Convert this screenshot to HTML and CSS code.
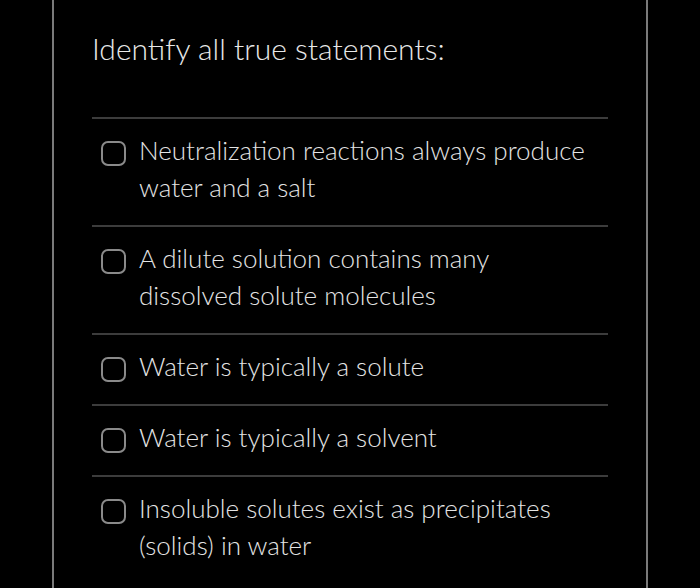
FILE: index.html
```html
<!DOCTYPE html>
<html>
<head>
<meta charset="utf-8">
<link rel="stylesheet" href="styles.css">
</head>
<body>
<div class="card">
  <h1 class="title">Identify all true statements:</h1>
  <ul class="options">
    <li class="option"><span class="box"></span><span class="label">Neutralization reactions always produce water and a salt</span></li>
    <li class="option"><span class="box"></span><span class="label">A dilute solution contains many dissolved solute molecules</span></li>
    <li class="option"><span class="box"></span><span class="label">Water is typically a solute</span></li>
    <li class="option"><span class="box"></span><span class="label">Water is typically a solvent</span></li>
    <li class="option last"><span class="box"></span><span class="label">Insoluble solutes exist as precipitates (solids) in water</span></li>
  </ul>
</div>
</body>
</html>
```
FILE: styles.css
```css
html, body {
  margin: 0;
  padding: 0;
  background: #000;
  height: 100%;
}
body {
  font-family: Lato, "Open Sans", sans-serif;
  color: #e6e6e6;
}
.card {
  box-sizing: border-box;
  margin-left: 52px;
  width: 596px;
  height: 588px;
  border-left: 2px solid #7a7a7a;
  border-right: 2px solid #7a7a7a;
  padding: 0 38px 0 38px;
  overflow: hidden;
}
.title {
  margin: 0;
  padding-top: 28px;
  height: 119px;
  box-sizing: border-box;
  font-size: 30px;
  font-weight: 300;
  line-height: 40px;
  color: #e8e8e8;
  border-bottom: 2px solid #3c3c3c;
}
.options {
  list-style: none;
  margin: 0;
  padding: 0;
}
.option {
  display: flex;
  align-items: flex-start;
  padding: 13px 14px 19px 9px;
  border-bottom: 2px solid #3c3c3c;
  font-size: 26px;
  font-weight: 300;
  line-height: 37px;
  color: #e4e4e4;
}
.option.last {
  border-bottom: none;
}
.box {
  flex: none;
  box-sizing: border-box;
  width: 25px;
  height: 25px;
  margin-top: 9px;
  margin-right: 13px;
  border: 2.5px solid #8a8a8a;
  border-radius: 7px;
}
.label {
  flex: 1;
}
```
